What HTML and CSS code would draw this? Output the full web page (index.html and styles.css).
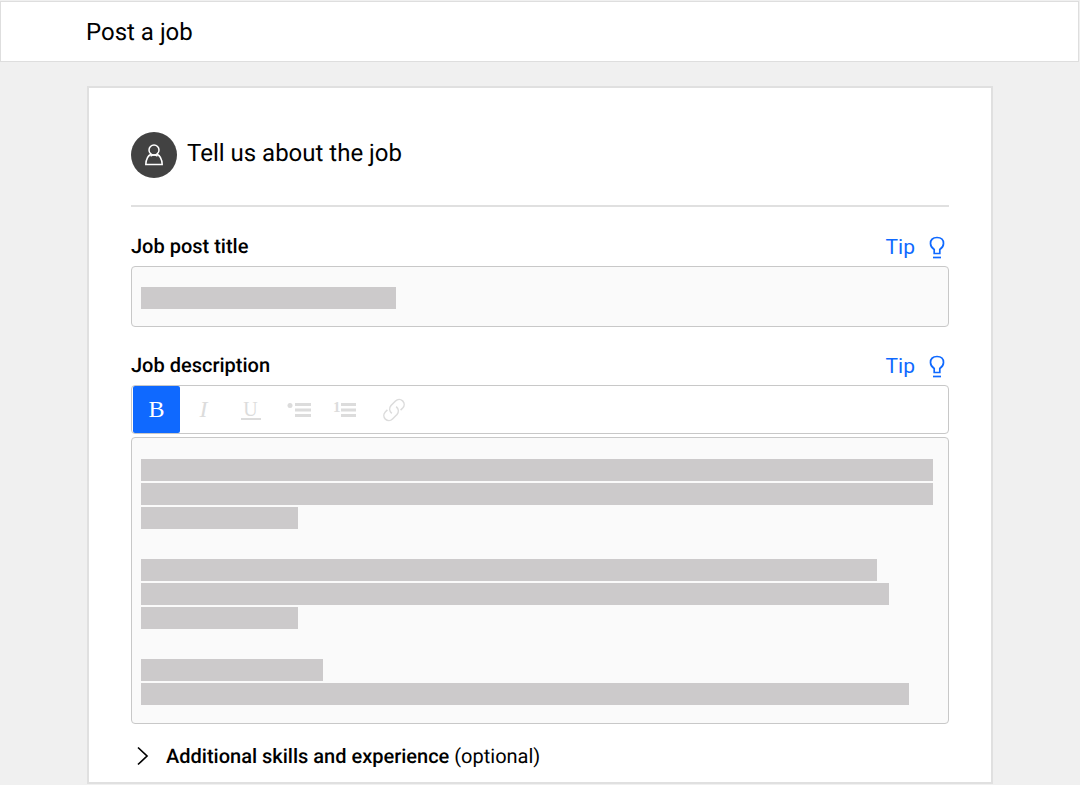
FILE: index.html
```html
<!DOCTYPE html>
<html lang="en">
<head>
    <meta charset="UTF-8">
    <meta name="viewport" content="width=device-width, initial-scale=1.0">
    <title>Post a job</title>
    <link rel="stylesheet" href="styles.css">
</head>
<body>
    <header class="header">
        <h1>Post a job</h1>
    </header>

    <main class="card">
        <div class="card-head">
            <span class="avatar">
                <svg width="20" height="24" viewBox="0 0 20 24" aria-hidden="true">
                    <circle cx="10" cy="7" r="5"/>
                    <path d="M7 11.2C4 12.6 2 15.5 1.8 21.5H18.2C18 15.5 16 12.6 13 11.2"/>
                    <path d="M6.5 13.2Q10 10.8 13.5 13.2"/>
                </svg>
            </span>
            <h2>Tell us about the job</h2>
        </div>

        <form>
            <div class="field">
                <div class="field-head">
                    <label for="title">Job post title</label>
                    <button type="button" class="tip">Tip
                        <svg width="16" height="24" viewBox="0 0 16 24" aria-hidden="true">
                            <path d="M5.2 18.5V14.5C2.8 12.8 1.5 11 1.5 8.4C1.5 4.8 4 2.5 8 2.5S14.5 4.8 14.5 8.4C14.5 11 13.2 12.8 10.8 14.5V18.5Z"/>
                            <path d="M4 22.5H12"/>
                        </svg>
                    </button>
                </div>
                <div class="box box-title">
                    <input type="text" id="title">
                    <div class="bars">
                        <span class="bar bar-title"></span>
                    </div>
                </div>
            </div>

            <div class="field">
                <div class="field-head">
                    <label for="description">Job description</label>
                    <button type="button" class="tip">Tip
                        <svg width="16" height="24" viewBox="0 0 16 24" aria-hidden="true">
                            <path d="M5.2 18.5V14.5C2.8 12.8 1.5 11 1.5 8.4C1.5 4.8 4 2.5 8 2.5S14.5 4.8 14.5 8.4C14.5 11 13.2 12.8 10.8 14.5V18.5Z"/>
                            <path d="M4 22.5H12"/>
                        </svg>
                    </button>
                </div>
                <div class="toolbar">
                    <button type="button" class="tool active" aria-label="Bold">B</button>
                    <button type="button" class="tool italic" aria-label="Italic">I</button>
                    <button type="button" class="tool" aria-label="Underline"><span class="underline">U</span></button>
                    <button type="button" class="tool" aria-label="Bulleted list">
                        <svg width="26" height="18" viewBox="0 0 26 18" aria-hidden="true">
                            <circle class="solid" cx="5" cy="4.5" r="2.5"/>
                            <path class="thick" d="M10 3.5H26M10 9H26M10 14.5H26"/>
                        </svg>
                    </button>
                    <button type="button" class="tool" aria-label="Numbered list">
                        <svg width="26" height="22" viewBox="0 0 26 22" aria-hidden="true">
                            <text class="digit" x="1" y="13">1</text>
                            <path class="thick" d="M9 5.5H24M9 11H24M9 16.5H24"/>
                        </svg>
                    </button>
                    <button type="button" class="tool" aria-label="Link">
                        <svg class="link" width="28" height="24" viewBox="-4 0 28 24" aria-hidden="true">
                            <path d="M9.8 15.4C7.3 13.2 7 10 9 7.6L13.5 3C15.5 1 18.6 1 20.6 2.9C22.7 5 22.6 8 20.7 10L18.6 12.1"/>
                            <path d="M14.2 8.6C16.7 10.8 17 14 15 16.4L10.5 21C8.5 23 5.4 23 3.4 21.1C1.3 19 1.4 16 3.3 14L5.4 11.9"/>
                        </svg>
                    </button>
                </div>
                <div class="box box-description">
                    <textarea id="description"></textarea>
                    <div class="bars">
                        <p>
                            <span class="bar"></span>
                            <span class="bar"></span>
                            <span class="bar bar-short"></span>
                        </p>
                        <p>
                            <span class="bar bar-long"></span>
                            <span class="bar bar-longer"></span>
                            <span class="bar bar-short"></span>
                        </p>
                        <p>
                            <span class="bar bar-medium"></span>
                            <span class="bar bar-longest"></span>
                        </p>
                    </div>
                </div>
            </div>

            <details>
                <summary>
                    <svg width="12" height="20" viewBox="0 0 12 20" aria-hidden="true">
                        <path d="M1 1.5L10 10L1 18.5"/>
                    </svg>
                    <span><strong>Additional skills and experience</strong> (optional)</span>
                </summary>
            </details>
        </form>
    </main>
</body>
</html>
```
FILE: styles.css
```css
* {
    box-sizing: border-box;
}

body {
    margin: 0;
    padding: 1px 1px 0 0;
    background: #f0f0f0;
    color: #000;
    font-family: Roboto, sans-serif;
    font-size: 20px;
    text-rendering: geometricPrecision;
}

h1,
h2 {
    margin: 0;
    font-size: 24px;
    font-weight: 400;
    line-height: 30px;
}

svg {
    fill: none;
    stroke: currentColor;
    stroke-width: 2;
}

.header {
    padding: 15px 85px 14px;
    background: #fff;
    border: 1px solid #dedede;
}

.card {
    margin: 24px 86px 0 87px;
    padding: 44px 42px 14px;
    background: #fff;
    border: 2px solid #e0e0e0;
}

.card-head {
    display: flex;
    align-items: center;
    gap: 10px;
    margin-bottom: 24px;
    padding-bottom: 27px;
    border-bottom: 2px solid #e0e0e0;
}

.card-head h2 {
    padding-bottom: 4px;
}

.avatar {
    display: flex;
    align-items: center;
    justify-content: center;
    width: 46px;
    height: 46px;
    border-radius: 50%;
    background: #424242;
    color: #fff;
}

.avatar svg {
    stroke-width: 1.5;
}

.field + .field {
    margin-top: 23px;
}

.field-head {
    display: flex;
    align-items: center;
    justify-content: space-between;
    height: 30px;
    margin-bottom: 5px;
}

label,
strong {
    font-weight: 500;
}

button {
    margin: 0;
    padding: 0;
    border: 0;
    background: none;
    font-family: inherit;
    cursor: pointer;
}

.tip {
    display: flex;
    align-items: center;
    gap: 14px;
    padding: 2px 4px 0 0;
    color: #0f69ff;
    font-size: 21px;
}

.tip svg {
    stroke-width: 1.7;
}

/* the control and its placeholder bars share one grid cell */
.box {
    display: grid;
    border: 1px solid #c8c8c8;
    border-radius: 4px;
    background: #fafafa;
}

.box > * {
    grid-area: 1 / 1;
}

.box input,
.box textarea {
    width: 100%;
    padding: 9px;
    border: 0;
    background: none;
    font: inherit;
    resize: none;
}

.bars {
    padding: 20px 15px 17px 9px;
    pointer-events: none;
}

.box-description .bars {
    padding-top: 21px;
    padding-bottom: 18px;
}

.bars p {
    display: grid;
    gap: 2px;
    margin: 0 0 30px;
}

.bars p:last-child {
    margin-bottom: 0;
}

.bar {
    display: block;
    max-width: 100%;
    height: 22px;
    background: #cccacb;
}

.bar-title {
    width: 255px;
}

.bar-short {
    width: 157px;
}

.bar-medium {
    width: 182px;
}

.bar-long {
    width: 736px;
}

.bar-longer {
    width: 748px;
}

.bar-longest {
    width: 768px;
}

.toolbar {
    display: flex;
    margin-bottom: 3px;
    padding-left: 1px;
    border: 1px solid #c8c8c8;
    border-radius: 4px;
}

.tool {
    display: flex;
    align-items: center;
    justify-content: center;
    width: 47px;
    height: 47px;
    color: #dcdcdc;
    font-family: "Liberation Serif", serif;
    font-size: 24px;
}

.tool.active {
    border-radius: 2px;
    background: #0f69ff;
    color: #fff;
}

.tool.italic {
    font-style: italic;
}

.underline {
    width: 20px;
    border-bottom: 2px solid;
    font-size: 20px;
    line-height: 18px;
}

.solid {
    fill: currentColor;
    stroke: none;
}

.thick {
    stroke-width: 3;
}

.digit {
    fill: currentColor;
    stroke: none;
    font-size: 15px;
    font-weight: 700;
}

.link {
    stroke-width: 1.5;
}

details {
    margin-top: 20px;
}

summary {
    display: flex;
    align-items: center;
    gap: 17px;
    padding-left: 6px;
    line-height: 24px;
    list-style: none;
    cursor: pointer;
}

summary svg {
    stroke-width: 1.7;
}
```
